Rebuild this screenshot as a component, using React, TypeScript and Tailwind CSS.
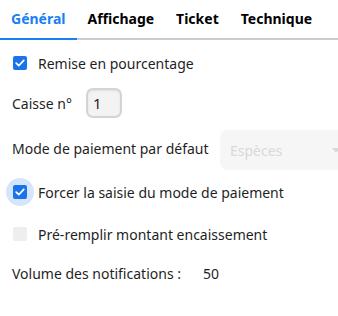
import React from 'react';

const font = { fontFamily: '"Noto Sans", "Open Sans", sans-serif' };

function Check({ checked, focus, disabled }: { checked?: boolean; focus?: boolean; disabled?: boolean }) {
  return (
    <span className="relative flex h-[14px] w-[14px] shrink-0 items-center justify-center">
      {focus && <span className="absolute left-[-7px] top-[-7px] h-[28px] w-[28px] rounded-full bg-[#d5e6fc]" />}
      <span
        className={`relative flex h-[14px] w-[14px] items-center justify-center rounded-[2px] ${
          checked ? 'bg-[#1a73e8]' : disabled ? 'bg-[#eeeeee]' : 'border border-[#767676] bg-white'
        }`}
      >
        {checked && (
          <svg width="12" height="12" viewBox="0 0 12 12" fill="none">
            <path d="M2.2 6.2 L4.8 8.7 L9.8 3.4" stroke="white" strokeWidth="1.7" strokeLinecap="round" strokeLinejoin="round" />
          </svg>
        )}
      </span>
    </span>
  );
}

export default function App() {
  const tabs = ['Général', 'Affichage', 'Ticket', 'Technique'];

  return (
    <div className="h-[316px] w-[338px] overflow-hidden bg-white text-[14px] text-[#1f1f1f]" style={font}>
      {/* Tabs */}
      <div className="flex h-[40px] border-b-2 border-[#cccccc]">
        {tabs.map((t, i) => (
          <div
            key={t}
            className={`-mb-[2px] flex items-center px-[11px] pb-[2px] text-[14px] font-bold ${
              i === 0 ? 'border-b-2 border-[#1a7ff0] text-[#1a7ff0]' : 'border-b-2 border-transparent text-black'
            }`}
          >
            {t}
          </div>
        ))}
      </div>

      {/* Content */}
      <div className="flex flex-col overflow-hidden pl-[12px]">
        <div className="flex h-[46px] items-center gap-[11px] pl-[1px]">
          <Check checked />
          <span>Remise en pourcentage</span>
        </div>

        <div className="flex h-[34px] items-center">
          <span className="w-[74px]">Caisse n°</span>
          <div className="flex h-[30px] w-[36px] items-center rounded-[7px] border-2 border-[#d4d4d4] bg-[#f3f3f3] px-[5px] text-[15px] shadow-[inset_0_1px_2px_rgba(0,0,0,0.08)]">
            1
          </div>
        </div>

        <div className="mt-[10px] flex h-[40px] items-center">
          <span className="w-[208px] shrink-0 whitespace-nowrap pb-[4px]">Mode de paiement par défaut</span>
          <div className="flex h-[40px] w-[124px] shrink-0 items-center justify-between rounded-l-[8px] bg-[#f6f6f6] pl-[10px] pr-[4px] text-[#d9d9d9]">
            <span>Espèces</span>
            <svg width="8" height="5" viewBox="0 0 8 5">
              <path d="M0 0 L8 0 L4 5 Z" fill="#d9d9d9" />
            </svg>
          </div>
        </div>

        <div className="flex h-[44px] items-center gap-[11px] pl-[1px]">
          <Check checked focus />
          <span>Forcer la saisie du mode de paiement</span>
        </div>

        <div className="flex h-[40px] items-center gap-[11px] pl-[1px]">
          <Check disabled />
          <span>Pré-remplir montant encaissement</span>
        </div>

        <div className="flex h-[38px] items-center">
          <span className="w-[191px]">Volume des notifications :</span>
          <span>50</span>
        </div>
      </div>
    </div>
  );
}
